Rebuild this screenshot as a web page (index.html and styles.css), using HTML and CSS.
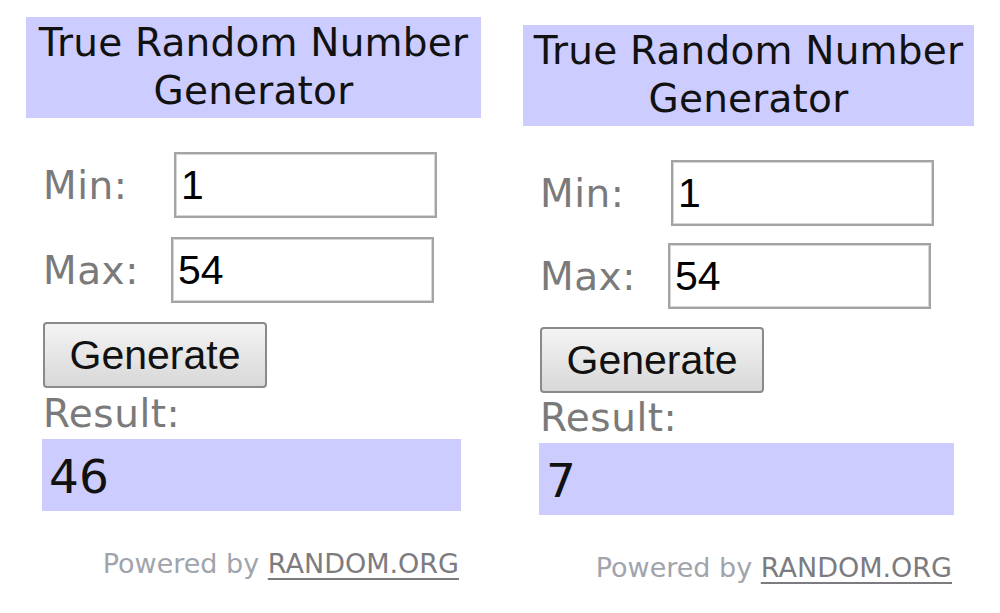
FILE: index.html
```html
<!DOCTYPE html>
<html>
<head>
<meta charset="utf-8">
<link rel="stylesheet" href="styles.css">
</head>
<body>
<div class="page">
  <div class="widget widget-a">
    <div class="title">True Random Number<br>Generator</div>
    <div class="form">
      <div class="row row-min"><span class="label">Min:</span><span class="input">1</span></div>
      <div class="row row-max"><span class="label">Max:</span><span class="input">54</span></div>
      <div class="btn-row"><span class="btn">Generate</span></div>
      <div class="result-label">Result:</div>
    </div>
    <div class="result">46</div>
    <div class="powered">Powered by <span class="link">RANDOM.ORG</span></div>
  </div>
  <div class="widget widget-b">
    <div class="title">True Random Number<br>Generator</div>
    <div class="form">
      <div class="row row-min"><span class="label">Min:</span><span class="input">1</span></div>
      <div class="row row-max"><span class="label">Max:</span><span class="input">54</span></div>
      <div class="btn-row"><span class="btn">Generate</span></div>
      <div class="result-label">Result:</div>
    </div>
    <div class="result">7</div>
    <div class="powered">Powered by <span class="link">RANDOM.ORG</span></div>
  </div>
</div>
</body>
</html>
```
FILE: styles.css
```css
html, body {
  margin: 0;
  padding: 0;
  background: #ffffff;
}
.page {
  display: flex;
  align-items: flex-start;
  gap: 42px;
  padding-left: 26px;
  font-family: "DejaVu Sans", Verdana, sans-serif;
}
.widget {
  display: flex;
  flex-direction: column;
}
.widget-a {
  width: 455px;
  margin-top: 17px;
}
.widget-b {
  width: 451px;
  margin-top: 25px;
}
.title {
  background: #ccccff;
  color: #111111;
  text-align: center;
  font-size: 39px;
  line-height: 48px;
  padding: 2px 0 3px;
  letter-spacing: 0.2px;
}
.form {
  padding-left: 17px;
}
.row {
  display: flex;
  align-items: center;
  height: 66px;
}
.row-min {
  margin-top: 34px;
}
.row-max {
  margin-top: 19px;
}
.widget-b .row-max {
  margin-top: 17px;
}
.label {
  color: #7a7a7a;
  font-size: 39px;
  letter-spacing: 0.5px;
}
.row-min .label {
  width: 131px;
}
.row-max .label {
  width: 128px;
}
.input {
  box-sizing: border-box;
  width: 263px;
  height: 66px;
  border: 2px solid #a4a4a4;
  box-shadow: inset 0 0 0 1px #d6d6d6;
  padding-left: 5px;
  font-family: "Liberation Sans", Arial, sans-serif;
  font-size: 41px;
  line-height: 62px;
  color: #000000;
}
.btn-row {
  margin-top: 19px;
  display: flex;
}
.widget-b .btn-row {
  margin-top: 18px;
}
.btn {
  box-sizing: border-box;
  width: 224px;
  height: 66px;
  border: 2px solid #8a8a8a;
  border-radius: 4px;
  background: linear-gradient(#f4f4f4, #e6e6e6 50%, #d8d8d8);
  font-family: "Liberation Sans", Arial, sans-serif;
  font-size: 41px;
  line-height: 62px;
  text-align: center;
  color: #111111;
}
.result-label {
  color: #7a7a7a;
  font-size: 39px;
  line-height: 51px;
  letter-spacing: 0.5px;
}
.widget-b .result-label {
  line-height: 50px;
}
.result {
  background: #ccccff;
  margin: 0 20px 0 16px;
  height: 72px;
  box-sizing: border-box;
  padding: 4px 0 0 7px;
  font-size: 47px;
  line-height: 68px;
  color: #111111;
}
.powered {
  margin-top: 36px;
  text-align: right;
  padding-right: 22px;
  font-size: 27px;
  line-height: 34px;
  color: #a0a4ac;
}
.link {
  color: #7c7c80;
  text-decoration: underline;
  text-decoration-thickness: 2px;
  text-underline-offset: 5px;
}
```
